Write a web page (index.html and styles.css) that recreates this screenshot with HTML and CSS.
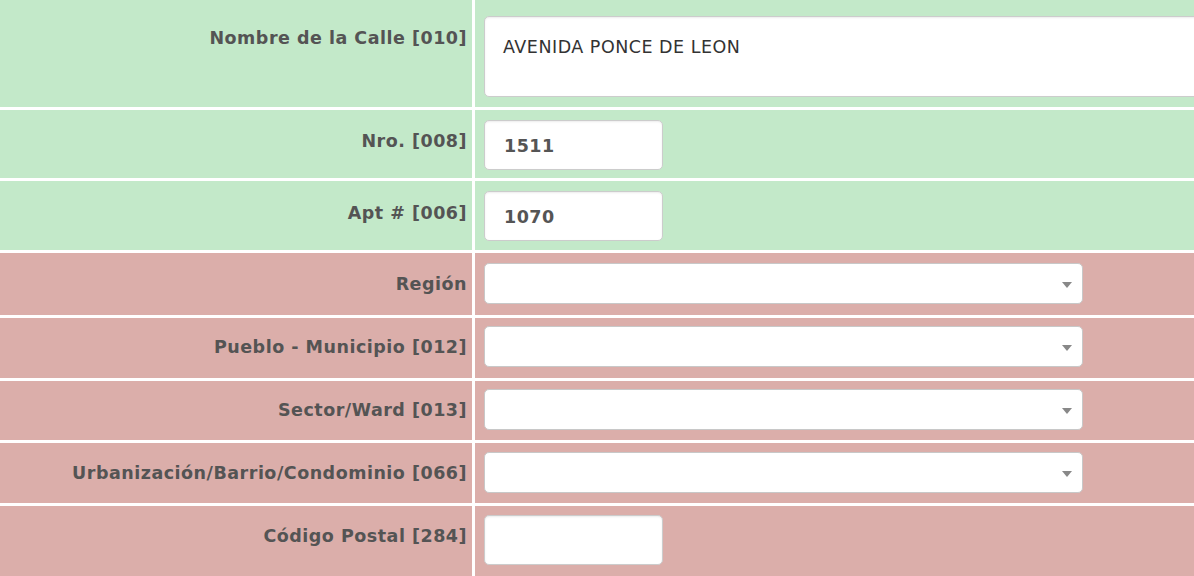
FILE: index.html
```html
<!DOCTYPE html>
<html>
<head>
<meta charset="utf-8">
<link rel="stylesheet" href="styles.css">
</head>
<body>
<div class="form">
  <div class="row green top-sliver"><div class="label"></div><div class="field"></div></div>
  <div class="row green h100">
    <div class="label">Nombre de la Calle [010]</div>
    <div class="field"><textarea class="textarea">AVENIDA PONCE DE LEON</textarea></div>
  </div>
  <div class="row green h68">
    <div class="label">Nro. [008]</div>
    <div class="field"><input class="text" value="1511"></div>
  </div>
  <div class="row green h69 l21">
    <div class="label">Apt # [006]</div>
    <div class="field"><input class="text" value="1070"></div>
  </div>
  <div class="row red h62">
    <div class="label">Región</div>
    <div class="field"><div class="select"><span class="arrow"></span></div></div>
  </div>
  <div class="row red h60 tight">
    <div class="label">Pueblo - Municipio [012]</div>
    <div class="field"><div class="select"><span class="arrow"></span></div></div>
  </div>
  <div class="row red h59 tight">
    <div class="label">Sector/Ward [013]</div>
    <div class="field"><div class="select"><span class="arrow"></span></div></div>
  </div>
  <div class="row red h60 tight2">
    <div class="label">Urbanización/Barrio/Condominio [066]</div>
    <div class="field"><div class="select"><span class="arrow"></span></div></div>
  </div>
  <div class="row red h70 tight2">
    <div class="label">Código Postal [284]</div>
    <div class="field"><input class="text" value=""></div>
  </div>
</div>
</body>
</html>
```
FILE: styles.css
```css
html, body {
  margin: 0;
  padding: 0;
  background: #ffffff;
  overflow: hidden;
}
.form {
  display: flex;
  flex-direction: column;
  gap: 3px;
  width: 1194px;
  height: 576px;
  overflow: hidden;
}
.row {
  display: grid;
  grid-template-columns: 472px 1fr;
  column-gap: 3px;
  flex: none;
}
.row > div { box-sizing: border-box; }
.green > div { background: #c3e9c9; }
.red > div { background: #dbaeaa; }
.top-sliver { height: 4px; }
.h100 { height: 100px; }
.h68 { height: 68px; }
.h69 { height: 69px; }
.h62 { height: 62px; }
.h60 { height: 60px; }
.h59 { height: 59px; }
.h70 { height: 80px; }
.label {
  font-family: "DejaVu Sans", Verdana, sans-serif;
  font-weight: bold;
  font-size: 17.5px;
  letter-spacing: 0.5px;
  color: #545454;
  text-align: right;
  padding: 20px 5px 0 0;
  line-height: 22px;
  white-space: nowrap;
}
.l21 .label { padding-top: 21px; }
.field {
  padding: 9px 0 0 9px;
  overflow: hidden;
}
.h68 .field, .h69 .field, .h62 .field { padding-top: 10px; }
.tight .field { padding-top: 8px; }
.tight2 .field { padding-top: 9px; }
.tight .label { padding-top: 18px; }
.tight2 .label { padding-top: 19px; }
.textarea {
  display: block;
  box-sizing: border-box;
  width: 760px;
  height: 81px;
  border: 1px solid #cccccc;
  border-radius: 5px;
  background: #ffffff;
  box-shadow: inset 0 1px 2px rgba(0,0,0,0.08);
  padding: 20px 18px;
  font-family: "DejaVu Sans", Verdana, sans-serif;
  font-size: 17.5px;
  letter-spacing: 0.5px;
  line-height: 20px;
  color: #333333;
  resize: both;
  outline: none;
  margin: 0;
}
.text {
  display: block;
  box-sizing: border-box;
  width: 179px;
  height: 50px;
  border: 1px solid #cccccc;
  border-radius: 5px;
  background: #ffffff;
  box-shadow: inset 0 1px 2px rgba(0,0,0,0.08);
  padding: 2px 19px 0;
  font-family: "DejaVu Sans", Verdana, sans-serif;
  font-weight: bold;
  font-size: 17.5px;
  letter-spacing: 0.5px;
  color: #555555;
  outline: none;
  margin: 0;
}
.select {
  box-sizing: border-box;
  width: 599px;
  height: 41px;
  border: 1px solid #c8c8c8;
  border-radius: 5px;
  background: #ffffff;
  position: relative;
}
.arrow {
  position: absolute;
  right: 10px;
  top: 18px;
  width: 0;
  height: 0;
  border-left: 5.5px solid transparent;
  border-right: 5.5px solid transparent;
  border-top: 6px solid #888888;
}
```
